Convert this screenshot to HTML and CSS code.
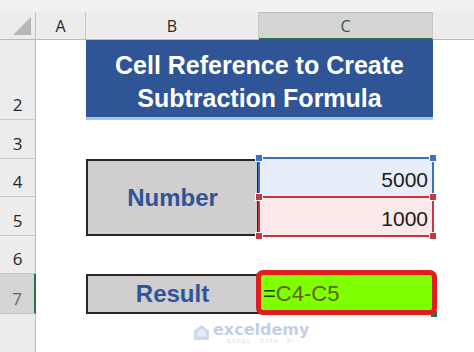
FILE: index.html
```html
<!DOCTYPE html>
<html lang="en">
	<head>
		<meta charset="UTF-8" />
		<title>Cell Reference to Create Subtraction Formula</title>
		<link rel="stylesheet" href="styles.css">
	</head>
	<body>
		<div class="sheet">
			<div class="top-strip"></div>

			<div class="col-head corner"><span class="corner-mark"></span></div>
			<div class="col-head">A</div>
			<div class="col-head">B</div>
			<div class="col-head active">C</div>
			<div class="col-head rest"></div>

			<div class="row-head">2</div>
			<div class="title">Cell Reference to Create<br />Subtraction Formula</div>
			<div class="row-head">3</div>
			<div class="row-head">4</div>
			<div class="label number">Number</div>
			<div class="value c4">
				5000
				<span class="range blue">
					<span class="handle tl"></span>
					<span class="handle tr"></span>
				</span>
			</div>
			<div class="row-head">5</div>
			<div class="value c5">
				1000
				<span class="range red">
					<span class="handle tl"></span>
					<span class="handle tr"></span>
					<span class="handle bl"></span>
					<span class="handle br"></span>
				</span>
			</div>
			<div class="row-head">6</div>
			<div class="row-head active">7</div>
			<div class="label result">Result</div>
			<div class="formula">
				<span class="eq">=</span><span class="ref">C4-C5</span>
				<span class="fill-handle"></span>
				<span class="frame"></span>
			</div>
			<div class="row-head last"></div>
		</div>

		<div class="watermark">
			<svg class="wm-logo" viewBox="0 0 16 16" xmlns="http://www.w3.org/2000/svg">
				<path d="M8 1 L15 6 L15 14 Q15 15 14 15 L2 15 Q1 15 1 14 L1 6 Z" fill="#cfd7e8" />
				<path d="M8 4 L12 7 L12 12 L4 12 L4 7 Z" fill="#e6ebf5" />
			</svg>
			<div class="wm-text">
				<span class="wm-name">exceldemy</span>
				<span class="wm-tag">EXCEL · DATA · BI</span>
			</div>
		</div>
	</body>
</html>
```

FILE: styles.css
```css
:root {
	--head-bg: #ececec;
	--head-line: #c6c6c6;
	--head-active: #d4d4d4;
	--excel-green: #217346;
	--title-blue: #2f5597;
	--label-bg: #d0cece;
	--range-blue: #3d6fc6;
	--range-red: #c8363f;
}
body {
	margin: 0;
	width: 474px;
	height: 352px;
	overflow: hidden;
	background: #fff;
	font-family: 'Liberation Sans', Arial, sans-serif;
	position: relative;
}
.sheet {
	display: grid;
	grid-template-columns: 36px 50px 173px 174px 1fr;
	grid-template-rows: 12px 28px 80px 39px 38px 39px 38px 40px 1fr;
	height: 352px;
}
.top-strip {
	grid-column: 1 / -1;
	background: #f1f1f1;
}
.col-head {
	background: var(--head-bg);
	border-right: 1px solid var(--head-line);
	border-bottom: 1px solid #b9b9b9;
	box-sizing: border-box;
	display: flex;
	justify-content: center;
	align-items: center;
	font-family: 'Open Sans', sans-serif;
	font-size: 16px;
	color: #262626;
}
.col-head.corner {
	position: relative;
}
.corner-mark {
	position: absolute;
	right: 4px;
	bottom: 4px;
	width: 0;
	height: 0;
	border-left: 18px solid transparent;
	border-bottom: 18px solid #b6b6b6;
}
.col-head.active {
	background: var(--head-active);
	border-top: 1px solid #bdbdbd;
	border-bottom: 2px solid var(--excel-green);
	color: #31583f;
}
.col-head.rest {
	border-right: none;
}
.row-head {
	grid-column: 1;
	background: var(--head-bg);
	border-right: 1px solid #bcbcbc;
	border-bottom: 1px solid var(--head-line);
	box-sizing: border-box;
	display: flex;
	justify-content: center;
	align-items: flex-end;
	padding-bottom: 4px;
	font-family: 'Open Sans', sans-serif;
	font-size: 17px;
	line-height: 20px;
	color: #262626;
}
.row-head.active {
	background: var(--head-active);
	border-right: 2px solid var(--excel-green);
	color: #4f6e5a;
}
.row-head.last {
	border-bottom: none;
}
.title {
	grid-column: 3 / 5;
	background: var(--title-blue);
	border-bottom: 3px solid #a9c7e8;
	box-sizing: border-box;
	display: flex;
	align-items: flex-end;
	justify-content: center;
	text-align: center;
	padding-bottom: 2px;
	color: #fff;
	font-weight: bold;
	font-size: 25px;
	line-height: 33px;
}
.label {
	grid-column: 3;
	background: var(--label-bg);
	border: 2px solid #262626;
	box-sizing: border-box;
	display: flex;
	justify-content: center;
	align-items: center;
	color: var(--title-blue);
	font-weight: bold;
	font-size: 24px;
}
.label.number {
	grid-row: 5 / 7;
}
.label.result {
	grid-row: 8;
}
.value {
	grid-column: 4;
	position: relative;
	display: flex;
	justify-content: flex-end;
	align-items: flex-end;
	padding: 0 5px 5px 0;
	font-size: 21px;
	line-height: 24px;
	color: #1a1a1a;
}
.c4 {
	grid-row: 5;
	background: #e7eefa;
}
.c5 {
	grid-row: 6;
	background: #fbe8e8;
}
.range {
	position: absolute;
	left: -1px;
	right: -1px;
	border: 2px solid;
}
.range.blue {
	top: -2px;
	bottom: -1px;
	border-color: var(--range-blue);
	color: var(--range-blue);
}
.range.red {
	top: -1px;
	bottom: -1px;
	border-color: var(--range-red);
	color: var(--range-red);
}
.handle {
	position: absolute;
	width: 6px;
	height: 6px;
	background: currentColor;
	border: 1px solid #fff;
}
.handle.tl { top: -5px; left: -5px; }
.handle.tr { top: -5px; right: -5px; }
.handle.bl { bottom: -5px; left: -5px; }
.handle.br { bottom: -5px; right: -5px; }
.formula {
	grid-column: 4;
	grid-row: 8;
	position: relative;
	background: #7fff00;
	display: flex;
	align-items: flex-end;
	padding: 0 0 8px 4px;
	font-size: 22px;
	line-height: 24px;
}
.eq {
	color: #22380a;
}
.ref {
	color: #5f6400;
}
.fill-handle {
	position: absolute;
	right: -4px;
	bottom: -3px;
	width: 6px;
	height: 6px;
	background: var(--excel-green);
}
.frame {
	position: absolute;
	left: -3px;
	right: -4px;
	top: -4px;
	bottom: -1px;
	border: 5px solid #e11d1d;
	border-radius: 7px;
}
.watermark {
	position: absolute;
	left: 193px;
	top: 321px;
	display: flex;
	align-items: center;
	gap: 3px;
}
.wm-logo {
	width: 17px;
	height: 17px;
}
.wm-text {
	display: flex;
	flex-direction: column;
	align-items: center;
}
.wm-name {
	font-family: 'DejaVu Sans', sans-serif;
	font-weight: bold;
	font-size: 16px;
	line-height: 17px;
	color: #c6cfe2;
}
.wm-tag {
	font-size: 5px;
	line-height: 6px;
	letter-spacing: 1.5px;
	color: #d3d8e2;
}
```
